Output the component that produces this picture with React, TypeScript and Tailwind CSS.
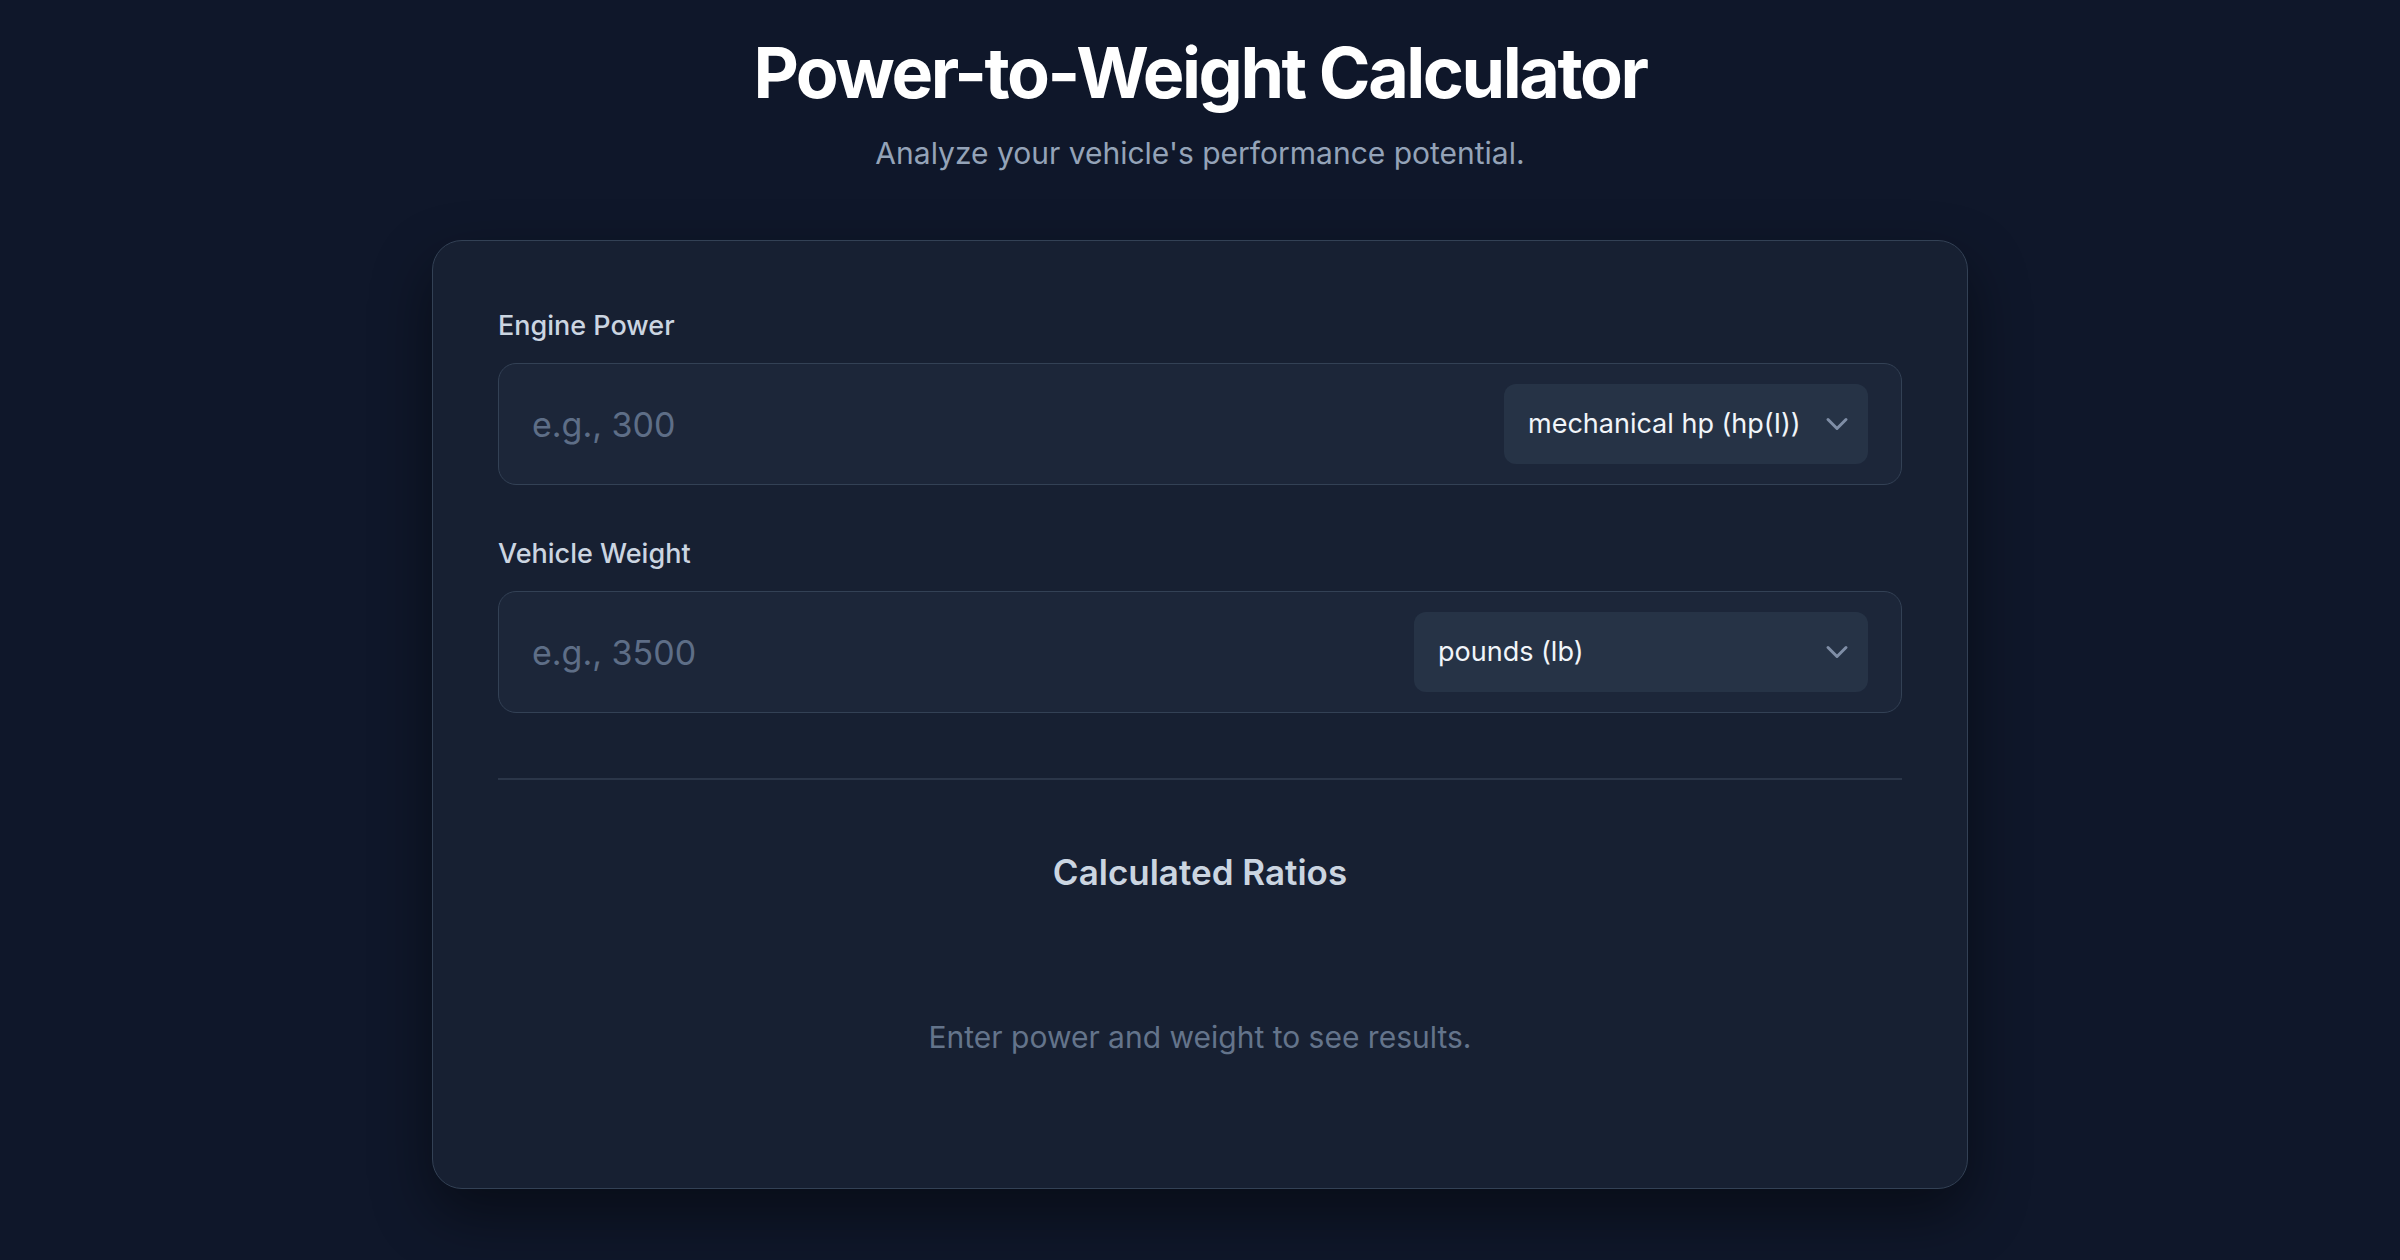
import React from "react";
import { ChevronDown } from "lucide-react";

function Field({
  label,
  placeholder,
  unit,
  selectWidth,
}: {
  label: string;
  placeholder: string;
  unit: string;
  selectWidth: string;
}) {
  return (
    <div className="flex flex-col">
      <label className="text-[27px] leading-[40px] font-medium text-[#cbd5e1]">{label}</label>
      <div className="mt-[17px] flex h-[122px] items-center rounded-[18px] border border-[#334155] bg-[#1c2639] pl-[33px] pr-[33px]">
        <input
          type="text"
          placeholder={placeholder}
          className="min-w-0 flex-1 bg-transparent text-[34px] text-white outline-none placeholder:text-[#5e6e87]"
        />
        <div
          className={`flex h-[80px] items-center justify-between rounded-[12px] bg-[#263346] pl-[24px] pr-[13px] ${selectWidth}`}
        >
          <span className="text-[27px] text-[#f1f5f9]">{unit}</span>
          <ChevronDown className="h-[36px] w-[36px] text-[#7f8ea6]" strokeWidth={2} />
        </div>
      </div>
    </div>
  );
}

export default function App() {
  return (
    <div
      className="flex min-h-screen flex-col items-center bg-[#0f172a] pt-[37px] pb-[60px]"
      style={{ fontFamily: "Inter, 'Noto Sans', sans-serif" }}
    >
      <h1 className="text-[70px] leading-[72px] font-bold tracking-[-0.035em] text-white">
        Power-to-Weight Calculator
      </h1>
      <p className="mt-[24px] text-[30px] leading-[40px] text-[#94a3b8]">
        Analyze your vehicle's performance potential.
      </p>
      <div className="mt-[67px] w-[1536px] rounded-[30px] border border-[#334155] bg-[#172032] p-[65px] shadow-[0_25px_60px_rgba(0,0,0,0.45)]">
        <Field label="Engine Power" placeholder="e.g., 300" unit="mechanical hp (hp(I))" selectWidth="w-[364px]" />
        <div className="mt-[49px]">
          <Field label="Vehicle Weight" placeholder="e.g., 3500" unit="pounds (lb)" selectWidth="w-[454px]" />
        </div>
        <div className="mt-[65px] h-[2px] bg-[#2b3649]" />
        <h2 className="mt-[70px] text-center text-[35px] leading-[45px] font-semibold text-[#cbd5e1]">
          Calculated Ratios
        </h2>
        <p className="mt-[122px] mb-[66px] text-center text-[30px] leading-[40px] text-[#64748b]">
          Enter power and weight to see results.
        </p>
      </div>
    </div>
  );
}
